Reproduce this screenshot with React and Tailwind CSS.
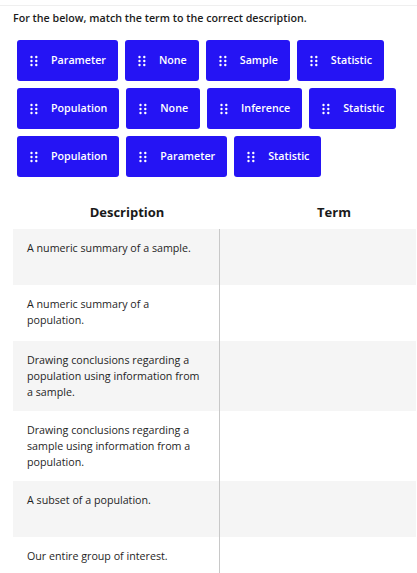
import React from "react";

const Dots = () => (
  <svg width="8" height="12" viewBox="0 0 8 12" className="shrink-0">
    {[2, 6, 10].map((y) => (
      <React.Fragment key={y}>
        <circle cx="1.5" cy={y} r="1.2" fill="white" />
        <circle cx="6.3" cy={y} r="1.2" fill="white" />
      </React.Fragment>
    ))}
  </svg>
);

const Chip = ({ label }) => (
  <div className="flex h-[41px] items-center rounded-[3px] bg-[#2514f4] pl-[13px] pr-[12px] text-[10.7px] font-semibold text-white">
    <Dots />
    <span className="ml-[13px] whitespace-nowrap">{label}</span>
  </div>
);

const rows = [
  ["Parameter", "None", "Sample", "Statistic"],
  ["Population", "None", "Inference", "Statistic"],
  ["Population", "Parameter", "Statistic"],
];

const descs = [
  "A numeric summary of a sample.",
  "A numeric summary of a population.",
  "Drawing conclusions regarding a population using information from a sample.",
  "Drawing conclusions regarding a sample using information from a population.",
  "A subset of a population.",
  "Our entire group of interest.",
];

export default function App() {
  return (
    <div
      className="h-[573px] w-[417px] overflow-hidden bg-white pt-[5px] text-[#1c1c1c]"
      style={{ fontFamily: '"Open Sans", "Liberation Sans", sans-serif' }}
    >
      <div className="h-px w-full bg-[#efefef]" />
      <div className="pl-[13px] pt-[4px] text-[10.7px] font-semibold leading-[16px]">
        For the below, match the term to the correct description.
      </div>
      <div className="mt-[14px] flex flex-col gap-[7px] pl-[17px]">
        {rows.map((r, i) => (
          <div key={i} className="flex gap-[7px]">
            {r.map((l, j) => (
              <Chip key={j} label={l} />
            ))}
          </div>
        ))}
      </div>
      <div className="ml-[13px] mt-[25px] w-[403px]">
        <div className="flex h-[27px] items-start text-[13px] font-bold leading-[20px] text-[#1a1a1a]">
          <div className="w-[206px] pl-[22px] text-center">Description</div>
          <div className="w-[197px] pl-[33px] text-center">Term</div>
        </div>
        {descs.map((d, i) => (
          <div
            key={i}
            className={`flex min-h-[56px] ${i % 2 === 0 ? "bg-[#f5f5f5]" : "bg-white"}`}
          >
            <div className="w-[206px] pb-[11px] pl-[14px] pr-[16px] pt-[11px] text-[10.7px] leading-[16px] text-[#1f1f1f]">
              {d}
            </div>
            <div className="w-[197px] border-l border-[#c8c8c8]" />
          </div>
        ))}
      </div>
    </div>
  );
}
